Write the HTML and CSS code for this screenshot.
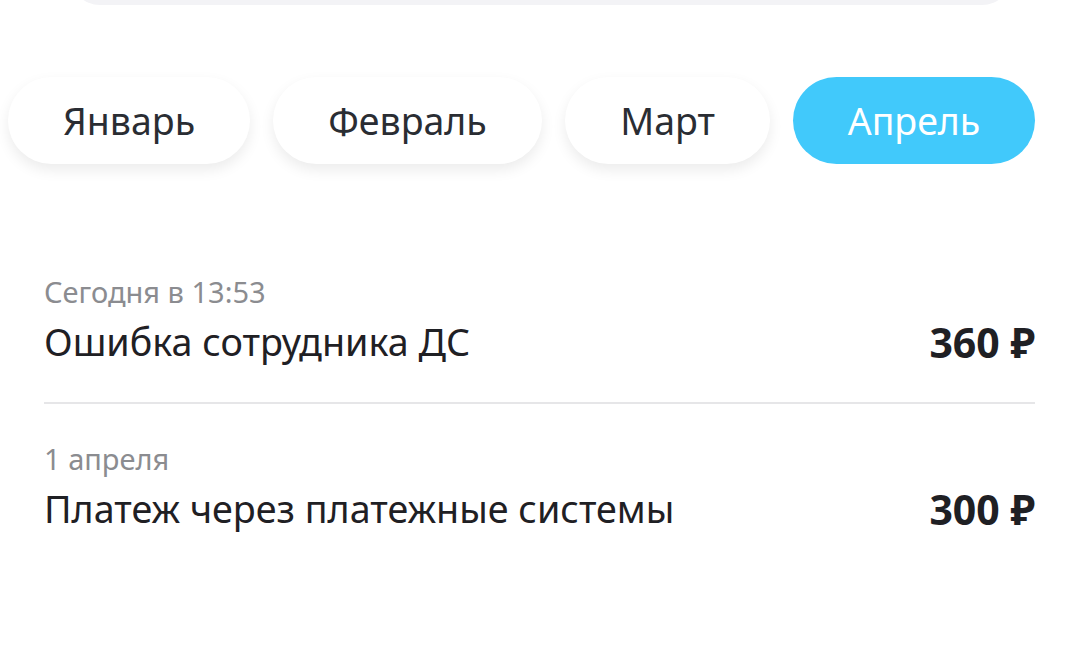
FILE: index.html
```html
<!DOCTYPE html>
<html lang="ru">
<head>
    <meta charset="UTF-8">
    <meta name="viewport" content="width=device-width, initial-scale=1.0">
    <title>Операции</title>
    <link rel="stylesheet" href="styles.css">
</head>
<body>
    <div class="search-bar"></div>

    <div class="months">
        <button class="month">Январь</button>
        <button class="month">Февраль</button>
        <button class="month">Март</button>
        <button class="month active">Апрель</button>
    </div>

    <div class="operations">
        <div class="operation">
            <div class="operation-info">
                <div class="operation-date">Сегодня в 13:53</div>
                <div class="operation-title">Ошибка сотрудника ДС</div>
            </div>
            <div class="operation-sum">360 ₽</div>
        </div>
        <div class="operation">
            <div class="operation-info">
                <div class="operation-date">1 апреля</div>
                <div class="operation-title">Платеж через платежные системы</div>
            </div>
            <div class="operation-sum">300 ₽</div>
        </div>
    </div>
</body>
</html>
```

FILE: styles.css
```css
* {
    margin: 0;
    padding: 0;
    box-sizing: border-box;
    font-family: 'Noto Sans', 'Open Sans', sans-serif;
}

body {
    background: #fff;
    width: 1080px;
    height: 651px;
    overflow: hidden;
}

.search-bar {
    height: 40px;
    margin: -35px 68px 0 70px;
    background: #f3f3f6;
    border-radius: 0 0 30px 30px;
}

.months {
    display: flex;
    gap: 23px;
    padding: 72px 44px 0 8px;
}

.month {
    height: 87px;
    border: none;
    border-radius: 44px;
    background: #fff;
    color: #2a2d33;
    font-size: 37.5px;
    box-shadow: 0 6px 14px rgba(0, 0, 0, 0.08);
}

.month:nth-child(1) { width: 242px; }
.month:nth-child(2) { width: 269px; }
.month:nth-child(3) { width: 205px; }
.month:nth-child(4) { width: 242px; }

.month.active {
    background: #41c9fb;
    color: #fff;
    box-shadow: none;
}

.operations {
    padding: 95px 45px 0 44px;
}

.operation {
    display: flex;
    align-items: flex-end;
    justify-content: space-between;
    padding: 10px 0 33px;
}

.operation + .operation {
    border-top: 2px solid #e6e6e8;
    padding-top: 32px;
}

.operation-date {
    color: #8b8c90;
    font-size: 29px;
    line-height: 46px;
}

.operation-title {
    color: #1f2024;
    font-size: 37.7px;
    line-height: 54px;
}

.operation-sum {
    color: #1f2024;
    font-size: 41px;
    font-weight: 700;
    line-height: 54px;
}
```
